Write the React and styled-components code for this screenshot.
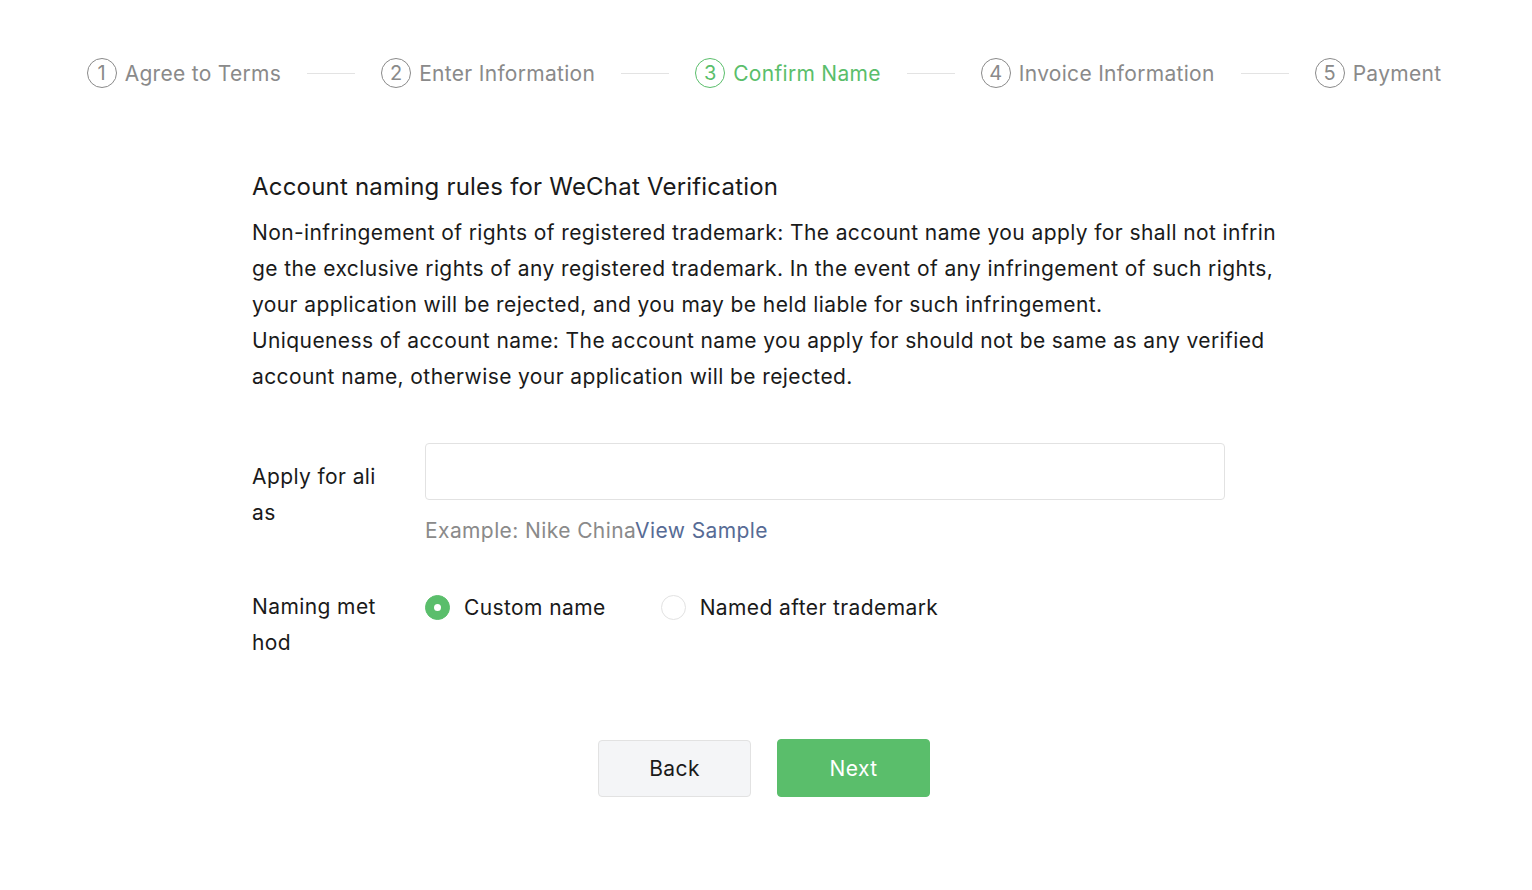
import React, { useState } from "react";
import styled, { createGlobalStyle } from "styled-components";

const GREEN = "#5abe6b";

const Global = createGlobalStyle`
  html, body { margin: 0; padding: 0; background: #fff; }
  body {
    font-family: Inter, "Noto Sans", "Noto Sans CJK SC", sans-serif;
    color: #1a1a1a;
    -webkit-font-smoothing: antialiased;
  }
  * { box-sizing: border-box; }
`;

const Page = styled.div`
  width: 1528px;
  padding-top: 57px;
  padding-bottom: 90px;
`;

const Steps = styled.div`
  display: flex;
  align-items: center;
  justify-content: center;
  gap: 26px;
  height: 32px;
`;

const Step = styled.div`
  display: flex;
  align-items: center;
  gap: 8px;
  font-size: 21px;
  letter-spacing: 0.3px;
  color: ${(p) => (p.$active ? GREEN : "#8a8a8a")};
  white-space: nowrap;
`;

const StepNum = styled.span`
  width: 30px;
  height: 30px;
  border-radius: 50%;
  border: 1px solid currentColor;
  display: inline-flex;
  align-items: center;
  justify-content: center;
  font-size: 20px;
  letter-spacing: 0;
  line-height: 1;
`;

const StepLine = styled.div`
  width: 48px;
  height: 1px;
  background: #e3e3e3;
`;

const Content = styled.div`
  width: 1024px;
  margin: 82px auto 0;
`;

const Title = styled.h2`
  margin: 0;
  font-size: 24px;
  font-weight: 400;
  letter-spacing: 0.2px;
  line-height: 32px;
  color: #1a1a1a;
`;

const Rules = styled.p`
  margin: 12px 0 0;
  font-size: 21px;
  letter-spacing: 0.4px;
  line-height: 36px;
  word-break: break-all;
  color: #1a1a1a;
`;

const Form = styled.div`
  margin-top: 48px;
  display: flex;
  flex-direction: column;
  gap: 40px;
`;

const Row = styled.div`
  display: flex;
  align-items: flex-start;
`;

const Label = styled.div`
  width: 130px;
  margin-right: 43px;
  padding-top: ${(p) => p.$pt || 0}px;
  font-size: 21px;
  letter-spacing: 0.4px;
  line-height: 36px;
  word-break: break-all;
  color: #1a1a1a;
`;

const Field = styled.div`
  display: flex;
  flex-direction: column;
`;

const Input = styled.input`
  width: 800px;
  height: 57px;
  border: 1px solid #e2e2e2;
  border-radius: 4px;
  padding: 0 16px;
  font: inherit;
  font-size: 20px;
  outline: none;
`;

const Hint = styled.div`
  margin-top: 13px;
  font-size: 21px;
  letter-spacing: 0.4px;
  line-height: 36px;
  color: #8a8a8a;
`;

const Link = styled.a`
  color: #576b95;
  text-decoration: none;
  cursor: pointer;
`;

const Radios = styled.div`
  display: flex;
  align-items: center;
  gap: 55px;
  height: 36px;
`;

const RadioOption = styled.label`
  display: flex;
  align-items: center;
  gap: 14px;
  font-size: 21px;
  letter-spacing: 0.4px;
  color: #1a1a1a;
  cursor: pointer;
`;

const RadioDot = styled.span`
  width: 25px;
  height: 25px;
  border-radius: 50%;
  display: inline-flex;
  align-items: center;
  justify-content: center;
  background: ${(p) => (p.$checked ? GREEN : "#fff")};
  border: 1px solid ${(p) => (p.$checked ? GREEN : "#e2e2e2")};
  &::after {
    content: "";
    width: 7px;
    height: 7px;
    border-radius: 50%;
    background: #fff;
    display: ${(p) => (p.$checked ? "block" : "none")};
  }
`;

const Actions = styled.div`
  display: flex;
  justify-content: center;
  align-items: center;
  gap: 26px;
  margin-top: 78px;
`;

const Button = styled.button`
  width: 153px;
  height: ${(p) => (p.$primary ? 58 : 57)}px;
  border-radius: 4px;
  font: inherit;
  font-size: 21px;
  letter-spacing: 0.4px;
  cursor: pointer;
  border: 1px solid ${(p) => (p.$primary ? GREEN : "#e2e2e2")};
  background: ${(p) => (p.$primary ? GREEN : "#f4f5f7")};
  color: ${(p) => (p.$primary ? "#fff" : "#1a1a1a")};
`;

const steps = [
  "Agree to Terms",
  "Enter Information",
  "Confirm Name",
  "Invoice Information",
  "Payment",
];

export default function App() {
  const [method, setMethod] = useState("custom");
  return (
    <Page>
      <Global />
      <Steps>
        {steps.map((s, i) => (
          <React.Fragment key={s}>
            {i > 0 && <StepLine />}
            <Step $active={i === 2}>
              <StepNum>{i + 1}</StepNum>
              {s}
            </Step>
          </React.Fragment>
        ))}
      </Steps>
      <Content>
        <Title>Account naming rules for WeChat Verification</Title>
        <Rules>
          Non-infringement of rights of registered trademark: The account name
          you apply for shall not infringe the exclusive rights of any
          registered trademark. In the event of any infringement of such
          rights, your application will be rejected, and you may be held
          liable for such infringement.
          <br />
          Uniqueness of account name: The account name you apply for should
          not be same as any verified account name, otherwise your application
          will be rejected.
        </Rules>
        <Form>
          <Row>
            <Label $pt={16}>Apply for alias</Label>
            <Field>
              <Input />
              <Hint>
                Example: Nike China<Link>View Sample</Link>
              </Hint>
            </Field>
          </Row>
          <Row>
            <Label>Naming method</Label>
            <Radios>
              <RadioOption onClick={() => setMethod("custom")}>
                <RadioDot $checked={method === "custom"} />
                Custom name
              </RadioOption>
              <RadioOption onClick={() => setMethod("trademark")}>
                <RadioDot $checked={method === "trademark"} />
                Named after trademark
              </RadioOption>
            </Radios>
          </Row>
        </Form>
        <Actions>
          <Button>Back</Button>
          <Button $primary>Next</Button>
        </Actions>
      </Content>
    </Page>
  );
}
